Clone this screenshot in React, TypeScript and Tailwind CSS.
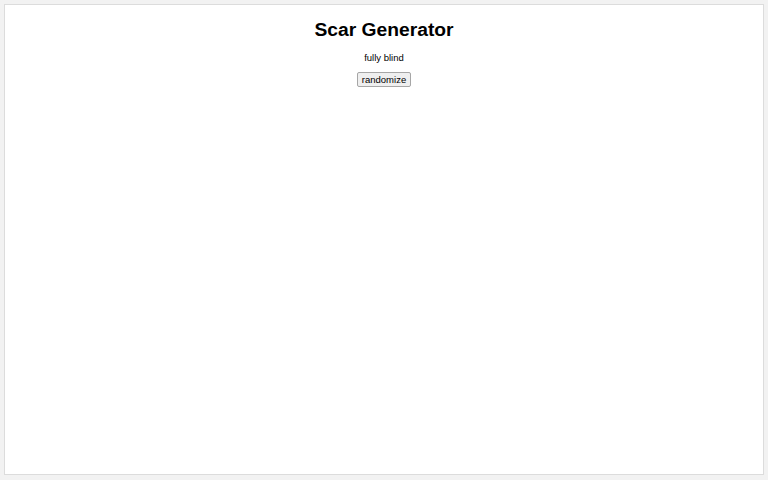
export default function App() {
  return (
    <div className="h-[480px] w-[768px] bg-[#f2f2f2] p-1 font-['Liberation_Sans',Arial,sans-serif] text-black">
      <div className="flex h-[471px] flex-col items-center border border-[#dcdcdc] bg-white pt-[14px]">
        <h1 className="text-[19.25px] font-bold leading-[22px]">Scar Generator</h1>
        <p className="mt-[11px] text-[9.5px] leading-[12px]">fully blind</p>
        <button className="mt-[8px] h-[15px] rounded-[2px] border border-[#a6a6a6] bg-[#efefef] px-[4px] text-[9.5px] leading-[12px]">
          randomize
        </button>
      </div>
    </div>
  );
}
